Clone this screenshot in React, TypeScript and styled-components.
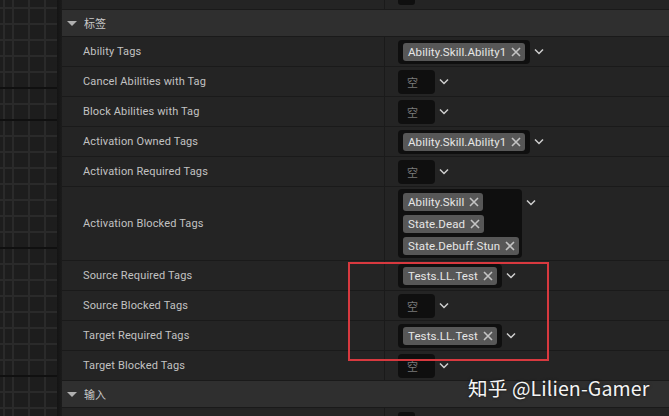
import React from "react";
import styled, { createGlobalStyle } from "styled-components";

const Global = createGlobalStyle`
  html, body { margin: 0; padding: 0; background: #1c1c1c; }
  body { font-family: Roboto, "Noto Sans", "Noto Sans CJK SC", sans-serif; }
`;

const Screen = styled.div`
  position: relative;
  display: flex;
  width: 669px;
  height: 416px;
  overflow: hidden;
`;

const GridCanvas = styled.div`
  width: 57px;
  flex: none;
  background-color: #1d1d1d;
  background-image:
    repeating-linear-gradient(to bottom, #101010 0 2px, transparent 2px 128px),
    repeating-linear-gradient(to bottom, #2a2a2a 0 2px, transparent 2px 16px),
    repeating-linear-gradient(to right, #2a2a2a 0 2px, transparent 2px 16px);
  background-position: 0 119px, 0 7px, 12px 0;
`;

const Shadow = styled.div`
  width: 5px;
  flex: none;
  background: linear-gradient(to right, #141414, #1b1b1b);
`;

const Panel = styled.div`
  flex: 1;
  display: flex;
  flex-direction: column;
  background: #242424;
`;

const Row = styled.div<{ $h: number }>`
  display: flex;
  height: ${(p) => p.$h}px;
  flex: none;
  border-bottom: 1px solid #1a1a1a;
`;

const NameCell = styled.div`
  width: 301px;
  padding-left: 21px;
  flex: none;
  display: flex;
  align-items: center;
  font-size: 11px;
  color: #c2c2c2;
  letter-spacing: 0.15px;
  border-right: 1px solid #1a1a1a;
`;

const ValueCell = styled.div<{ $top?: boolean }>`
  flex: 1;
  display: flex;
  align-items: ${(p) => (p.$top ? "flex-start" : "center")};
  padding-left: 13px;
  padding-top: ${(p) => (p.$top ? "2px" : "0")};
  gap: 4px;
`;

const Header = styled.div`
  height: 26px;
  flex: none;
  display: flex;
  align-items: center;
  background: #2f2f2f;
  border-bottom: 1px solid #1a1a1a;
  padding-left: 5px;
  gap: 7px;
  font-family: "Noto Sans CJK SC", sans-serif;
  font-size: 11px;
  color: #c8c8c8;
`;

const Triangle = styled.div`
  width: 0;
  height: 0;
  margin-top: 1px;
  border-left: 5px solid transparent;
  border-right: 5px solid transparent;
  border-top: 5px solid #b0b0b0;
`;

const TagBox = styled.div`
  display: flex;
  flex-direction: column;
  gap: 4px;
  align-items: flex-start;
  background: #0f0f0f;
  border-radius: 4px;
  padding: 3px 5px;
  min-height: 18px;
`;

const MultiBox = styled(TagBox)`
  padding: 4px 5px 3px 5px;
  width: 114px;
`;

const Chip = styled.div`
  height: 18px;
  display: flex;
  align-items: center;
  background: #575757;
  border-radius: 3px;
  padding: 0 4px 0 5px;
  gap: 5px;
  font-size: 11.5px;
  letter-spacing: 0.1px;
  color: #e6e6e6;
  white-space: nowrap;
`;

const EmptyBox = styled.div`
  width: 37px;
  height: 24px;
  box-sizing: border-box;
  background: #0f0f0f;
  border-radius: 4px;
  display: flex;
  align-items: center;
  padding-left: 9px;
  font-family: "Noto Sans CJK SC", sans-serif;
  font-size: 11px;
  color: #7a7a7a;
`;

const Chevron = styled.svg<{ $mt?: number }>`
  width: 10px;
  height: 7px;
  flex: none;
  margin-top: ${(p) => p.$mt ?? 0}px;
`;

const CheckStub = styled.div`
  width: 17px;
  height: 5px;
  background: #0f0f0f;
  border-radius: 0 0 3px 3px;
  align-self: flex-start;
`;

const BottomStub = styled.div`
  width: 17px;
  height: 6px;
  margin-top: 4px;
  background: #0f0f0f;
  border-radius: 3px 3px 0 0;
  align-self: flex-start;
`;

const Highlight = styled.div`
  position: absolute;
  left: 348px;
  top: 262px;
  width: 197px;
  height: 95px;
  border: 2px solid #d8393f;
  pointer-events: none;
`;

const Watermark = styled.div`
  position: absolute;
  left: 468px;
  top: 373px;
  font-family: "Noto Sans CJK SC", "Noto Sans", sans-serif;
  font-size: 19.6px;
  color: #f4f4f4;
  text-shadow: 0 0 3px rgba(0, 0, 0, 0.6);
  white-space: nowrap;
  letter-spacing: 0.1px;
`;

const ChevronIcon = ({ mt }: { mt?: number }) => (
  <Chevron $mt={mt} viewBox="0 0 10 7">
    <polyline points="1,1.5 5,5.5 9,1.5" fill="none" stroke="#cfcfcf" strokeWidth="1.5" />
  </Chevron>
);

const XIcon = () => (
  <svg width="10" height="10" viewBox="0 0 10 10">
    <path d="M1 1 L9 9 M9 1 L1 9" stroke="#c4c4c4" strokeWidth="1.6" />
  </svg>
);

const Tag = ({ label }: { label: string }) => (
  <Chip>
    {label}
    <XIcon />
  </Chip>
);

type Val = string[] | null;

const rows: { name: string; tags: Val }[] = [
  { name: "Ability Tags", tags: ["Ability.Skill.Ability1"] },
  { name: "Cancel Abilities with Tag", tags: null },
  { name: "Block Abilities with Tag", tags: null },
  { name: "Activation Owned Tags", tags: ["Ability.Skill.Ability1"] },
  { name: "Activation Required Tags", tags: null },
  { name: "Activation Blocked Tags", tags: ["Ability.Skill", "State.Dead", "State.Debuff.Stun"] },
  { name: "Source Required Tags", tags: ["Tests.LL.Test"] },
  { name: "Source Blocked Tags", tags: null },
  { name: "Target Required Tags", tags: ["Tests.LL.Test"] },
  { name: "Target Blocked Tags", tags: null },
];

const PropRow = ({ name, tags }: { name: string; tags: Val }) => {
  const multi = !!tags && tags.length > 1;
  return (
    <Row $h={multi ? 73 : 29}>
      <NameCell>{name}</NameCell>
      <ValueCell $top={multi}>
        {tags === null ? (
          <EmptyBox>空</EmptyBox>
        ) : multi ? (
          <MultiBox>
            {tags.map((t) => (
              <Tag key={t} label={t} />
            ))}
          </MultiBox>
        ) : (
          <TagBox>
            <Tag label={tags[0]} />
          </TagBox>
        )}
        <ChevronIcon mt={multi ? 10 : 0} />
      </ValueCell>
    </Row>
  );
};

export default function App() {
  return (
    <>
      <Global />
      <Screen>
        <GridCanvas />
        <Shadow />
        <Panel>
          <Row $h={9}>
            <NameCell />
            <ValueCell>
              <CheckStub />
            </ValueCell>
          </Row>
          <Header>
            <Triangle />
            标签
          </Header>
          {rows.map((r) => (
            <PropRow key={r.name} name={r.name} tags={r.tags} />
          ))}
          <Header>
            <Triangle />
            输入
          </Header>
          <Row $h={12}>
            <NameCell />
            <ValueCell>
              <BottomStub />
            </ValueCell>
          </Row>
        </Panel>
        <Highlight />
        <Watermark>知乎 @Lilien-Gamer</Watermark>
      </Screen>
    </>
  );
}
